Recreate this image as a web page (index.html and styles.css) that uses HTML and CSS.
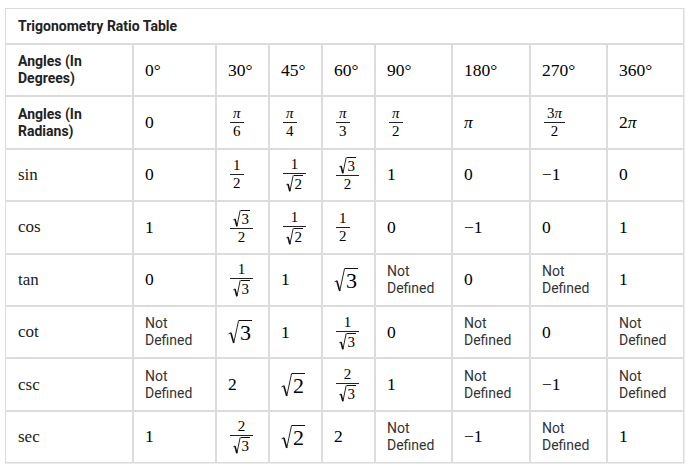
FILE: index.html
```html
<!DOCTYPE html>
<html lang="en">
<head>
<meta charset="utf-8">
<title>Trigonometry Ratio Table</title>
<link rel="stylesheet" href="styles.css">
</head>
<body>
<table class="trig">
  <colgroup>
    <col class="c0"><col class="c1"><col class="c2"><col class="c2"><col class="c2"><col class="c5"><col class="c6"><col class="c5"><col class="c5">
  </colgroup>
  <thead>
    <tr class="title-row"><th colspan="9" class="title">Trigonometry Ratio Table</th></tr>
  </thead>
  <tbody>
    <tr>
      <th class="label">Angles (In Degrees)</th>
      <td><span class="m">0°</span></td>
      <td><span class="m">30°</span></td>
      <td><span class="m">45°</span></td>
      <td><span class="m">60°</span></td>
      <td><span class="m">90°</span></td>
      <td><span class="m">180°</span></td>
      <td><span class="m">270°</span></td>
      <td><span class="m">360°</span></td>
    </tr>
    <tr>
      <th class="label">Angles (In Radians)</th>
      <td><span class="m">0</span></td>
      <td><span class="frac"><span class="n"><i>π</i></span><span class="d">6</span></span></td>
      <td><span class="frac"><span class="n"><i>π</i></span><span class="d">4</span></span></td>
      <td><span class="frac"><span class="n"><i>π</i></span><span class="d">3</span></span></td>
      <td><span class="frac"><span class="n"><i>π</i></span><span class="d">2</span></span></td>
      <td><span class="m"><i>π</i></span></td>
      <td><span class="frac"><span class="n">3<i>π</i></span><span class="d">2</span></span></td>
      <td><span class="m">2<i>π</i></span></td>
    </tr>
    <tr>
      <td class="fn">sin</td>
      <td><span class="m">0</span></td>
      <td><span class="frac"><span class="n">1</span><span class="d">2</span></span></td>
      <td><span class="frac"><span class="n">1</span><span class="d"><span class="sqrt"><svg viewBox="0 0 10 20" preserveAspectRatio="none"><path class="thin" d="M0.5 11.5 L2.6 10.6"/><path class="thick" d="M2.6 10.6 L5.2 19.2"/><path class="thin" d="M5.2 19.2 L9.6 0.5 L10 0.5"/></svg><span class="rc">2</span></span></span></span></td>
      <td><span class="frac"><span class="n"><span class="sqrt"><svg viewBox="0 0 10 20" preserveAspectRatio="none"><path class="thin" d="M0.5 11.5 L2.6 10.6"/><path class="thick" d="M2.6 10.6 L5.2 19.2"/><path class="thin" d="M5.2 19.2 L9.6 0.5 L10 0.5"/></svg><span class="rc">3</span></span></span><span class="d">2</span></span></td>
      <td><span class="m">1</span></td>
      <td><span class="m">0</span></td>
      <td><span class="m">−1</span></td>
      <td><span class="m">0</span></td>
    </tr>
    <tr>
      <td class="fn">cos</td>
      <td><span class="m">1</span></td>
      <td><span class="frac"><span class="n"><span class="sqrt"><svg viewBox="0 0 10 20" preserveAspectRatio="none"><path class="thin" d="M0.5 11.5 L2.6 10.6"/><path class="thick" d="M2.6 10.6 L5.2 19.2"/><path class="thin" d="M5.2 19.2 L9.6 0.5 L10 0.5"/></svg><span class="rc">3</span></span></span><span class="d">2</span></span></td>
      <td><span class="frac"><span class="n">1</span><span class="d"><span class="sqrt"><svg viewBox="0 0 10 20" preserveAspectRatio="none"><path class="thin" d="M0.5 11.5 L2.6 10.6"/><path class="thick" d="M2.6 10.6 L5.2 19.2"/><path class="thin" d="M5.2 19.2 L9.6 0.5 L10 0.5"/></svg><span class="rc">2</span></span></span></span></td>
      <td><span class="frac"><span class="n">1</span><span class="d">2</span></span></td>
      <td><span class="m">0</span></td>
      <td><span class="m">−1</span></td>
      <td><span class="m">0</span></td>
      <td><span class="m">1</span></td>
    </tr>
    <tr>
      <td class="fn">tan</td>
      <td><span class="m">0</span></td>
      <td><span class="frac"><span class="n">1</span><span class="d"><span class="sqrt"><svg viewBox="0 0 10 20" preserveAspectRatio="none"><path class="thin" d="M0.5 11.5 L2.6 10.6"/><path class="thick" d="M2.6 10.6 L5.2 19.2"/><path class="thin" d="M5.2 19.2 L9.6 0.5 L10 0.5"/></svg><span class="rc">3</span></span></span></span></td>
      <td><span class="m">1</span></td>
      <td><span class="sqrt big"><svg viewBox="0 0 10 20" preserveAspectRatio="none"><path class="thin" d="M0.5 11.5 L2.6 10.6"/><path class="thick" d="M2.6 10.6 L5.2 19.2"/><path class="thin" d="M5.2 19.2 L9.6 0.5 L10 0.5"/></svg><span class="rc">3</span></span></td>
      <td class="nd">Not Defined</td>
      <td><span class="m">0</span></td>
      <td class="nd">Not Defined</td>
      <td><span class="m">1</span></td>
    </tr>
    <tr>
      <td class="fn">cot</td>
      <td class="nd">Not Defined</td>
      <td><span class="sqrt big"><svg viewBox="0 0 10 20" preserveAspectRatio="none"><path class="thin" d="M0.5 11.5 L2.6 10.6"/><path class="thick" d="M2.6 10.6 L5.2 19.2"/><path class="thin" d="M5.2 19.2 L9.6 0.5 L10 0.5"/></svg><span class="rc">3</span></span></td>
      <td><span class="m">1</span></td>
      <td><span class="frac"><span class="n">1</span><span class="d"><span class="sqrt"><svg viewBox="0 0 10 20" preserveAspectRatio="none"><path class="thin" d="M0.5 11.5 L2.6 10.6"/><path class="thick" d="M2.6 10.6 L5.2 19.2"/><path class="thin" d="M5.2 19.2 L9.6 0.5 L10 0.5"/></svg><span class="rc">3</span></span></span></span></td>
      <td><span class="m">0</span></td>
      <td class="nd">Not Defined</td>
      <td><span class="m">0</span></td>
      <td class="nd">Not Defined</td>
    </tr>
    <tr>
      <td class="fn">csc</td>
      <td class="nd">Not Defined</td>
      <td><span class="m">2</span></td>
      <td><span class="sqrt big"><svg viewBox="0 0 10 20" preserveAspectRatio="none"><path class="thin" d="M0.5 11.5 L2.6 10.6"/><path class="thick" d="M2.6 10.6 L5.2 19.2"/><path class="thin" d="M5.2 19.2 L9.6 0.5 L10 0.5"/></svg><span class="rc">2</span></span></td>
      <td><span class="frac"><span class="n">2</span><span class="d"><span class="sqrt"><svg viewBox="0 0 10 20" preserveAspectRatio="none"><path class="thin" d="M0.5 11.5 L2.6 10.6"/><path class="thick" d="M2.6 10.6 L5.2 19.2"/><path class="thin" d="M5.2 19.2 L9.6 0.5 L10 0.5"/></svg><span class="rc">3</span></span></span></span></td>
      <td><span class="m">1</span></td>
      <td class="nd">Not Defined</td>
      <td><span class="m">−1</span></td>
      <td class="nd">Not Defined</td>
    </tr>
    <tr>
      <td class="fn">sec</td>
      <td><span class="m">1</span></td>
      <td><span class="frac"><span class="n">2</span><span class="d"><span class="sqrt"><svg viewBox="0 0 10 20" preserveAspectRatio="none"><path class="thin" d="M0.5 11.5 L2.6 10.6"/><path class="thick" d="M2.6 10.6 L5.2 19.2"/><path class="thin" d="M5.2 19.2 L9.6 0.5 L10 0.5"/></svg><span class="rc">3</span></span></span></span></td>
      <td><span class="sqrt big"><svg viewBox="0 0 10 20" preserveAspectRatio="none"><path class="thin" d="M0.5 11.5 L2.6 10.6"/><path class="thick" d="M2.6 10.6 L5.2 19.2"/><path class="thin" d="M5.2 19.2 L9.6 0.5 L10 0.5"/></svg><span class="rc">2</span></span></td>
      <td><span class="m">2</span></td>
      <td class="nd">Not Defined</td>
      <td><span class="m">−1</span></td>
      <td class="nd">Not Defined</td>
      <td><span class="m">1</span></td>
    </tr>
  </tbody>
</table>
</body>
</html>
```
FILE: styles.css
```css
html, body {
  margin: 0;
  padding: 0;
  background: #ffffff;
}

body {
  font-family: Roboto, "Liberation Sans", sans-serif;
  color: #222222;
}

.trig {
  margin: 8px 0 0 5px;
  width: 680px;
  table-layout: fixed;
  border-collapse: separate;
  border-spacing: 0;
  border-right: 1px solid #ececec;
  border-bottom: 1px solid #ececec;
}

.c0 { width: 128px; }
.c1 { width: 83px; }
.c2 { width: 53px; }
.c5 { width: 77px; }
.c6 { width: 78px; }

.trig th,
.trig td {
  box-sizing: border-box;
  border: 1px solid #dcdcdc;
  padding: 0 2px 0 11px;
  text-align: left;
  vertical-align: middle;
  font-weight: normal;
}

.trig tbody tr {
  height: 52.4px;
}

.title-row {
  height: 36px;
}

.trig .title {
  padding-left: 12px;
  font-size: 14px;
  font-weight: 700;
  color: #222222;
}

.trig .label {
  padding-left: 12px;
  padding-right: 20px;
  font-size: 14px;
  line-height: 17px;
  font-weight: 700;
  color: #222222;
}

.trig .fn {
  padding-left: 12px;
  font-family: "Liberation Serif", serif;
  font-size: 17px;
  color: #1a1a1a;
}

.trig .nd {
  font-size: 14px;
  line-height: 17px;
  color: #333333;
  padding-right: 8px;
}

.m {
  font-family: "Liberation Serif", serif;
  font-size: 17.5px;
  color: #000000;
}

.m i,
.frac i {
  font-style: italic;
}

.frac {
  display: inline-flex;
  flex-direction: column;
  vertical-align: middle;
  margin: 0 2px;
  font-family: "Liberation Serif", serif;
  font-size: 15px;
  line-height: 1;
  color: #000000;
  text-align: center;
}

.frac .n {
  display: flex;
  justify-content: center;
  padding: 0 3px 1px;
  border-bottom: 1px solid #222222;
}

.frac .d {
  display: flex;
  justify-content: center;
  padding: 1px 3px 0;
}

.sqrt {
  display: inline-flex;
  align-items: flex-end;
  vertical-align: middle;
  font-family: "Liberation Serif", serif;
  line-height: 1;
  color: #000000;
}

.sqrt svg {
  display: block;
  flex: none;
  width: 0.5em;
  height: calc(1em + 2px);
  overflow: visible;
  fill: none;
  stroke: #111111;
}

.sqrt .thin {
  stroke-width: 0.9;
  vector-effect: non-scaling-stroke;
}

.sqrt .thick {
  stroke-width: 1.6;
  vector-effect: non-scaling-stroke;
}

.sqrt .rc {
  display: block;
  padding: 1px 1px 0;
  border-top: 1px solid #111111;
}

.sqrt.big {
  font-size: 22px;
}
```
